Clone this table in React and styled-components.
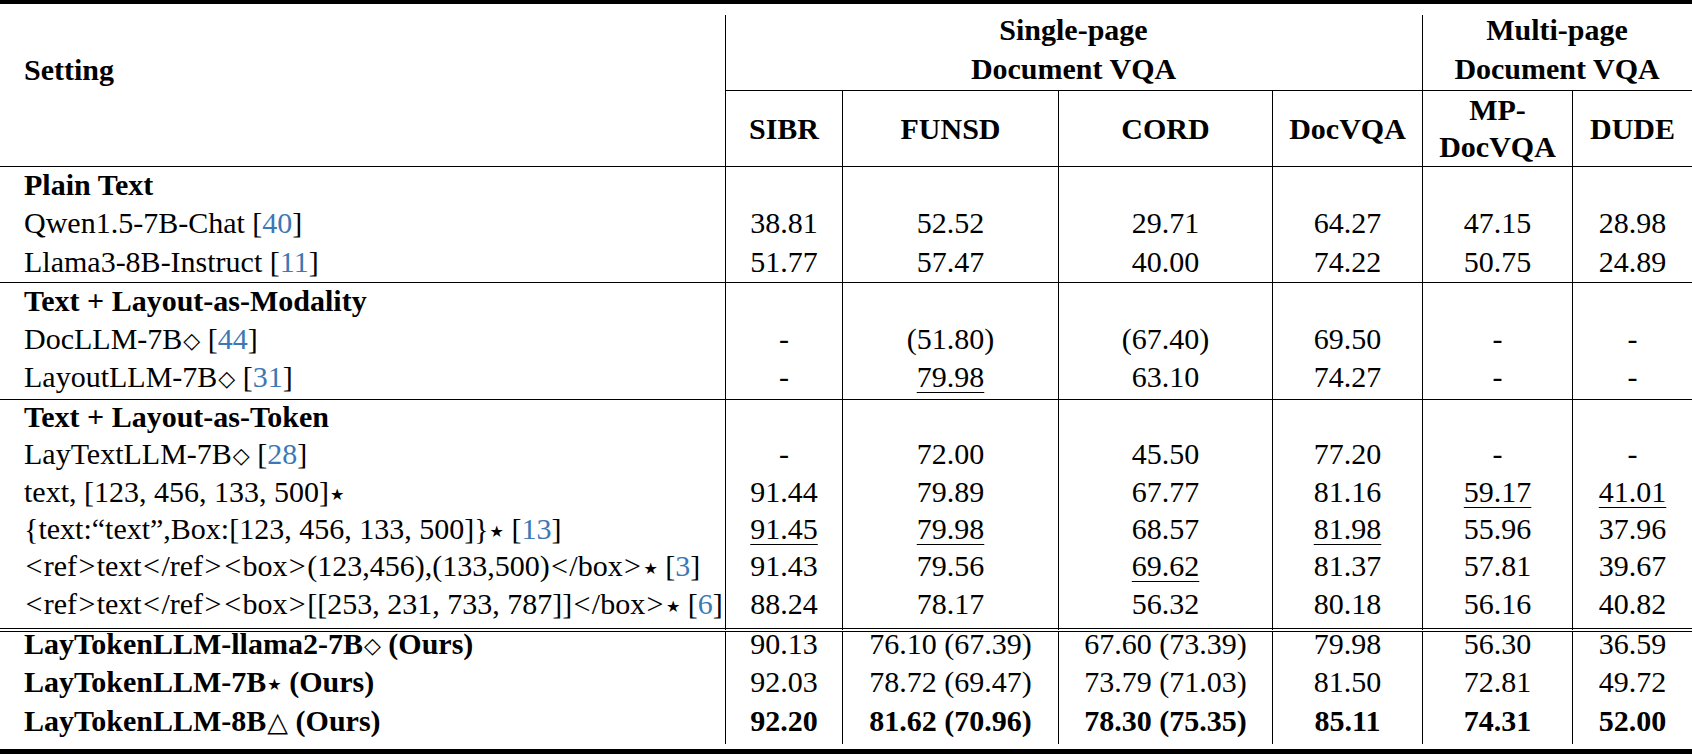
import React from "react";
import styled, { createGlobalStyle } from "styled-components";

const GlobalStyle = createGlobalStyle`
  html, body {
    margin: 0;
    padding: 0;
    background: #fff;
  }
  body {
    font-family: "Liberation Serif", "Times New Roman", serif;
    color: #000;
  }
`;

const Table = styled.table`
  width: 1692px;
  border-collapse: separate;
  border-spacing: 0;
  table-layout: fixed;
  font-size: 30px;
  border-top: 4px solid #000;
  border-bottom: 5px solid #000;
`;

const SettingHead = styled.th`
  padding: 46.75px 0 0 24px;
  line-height: 38.3px;
  text-align: left;
  vertical-align: top;
  font-weight: 700;
  border-bottom: 1px solid #000;
`;

const GroupHead = styled.th`
  padding: 7.4px 0 2px;
  line-height: 38.3px;
  text-align: center;
  vertical-align: top;
  font-weight: 700;
  border-bottom: 1px solid #000;
  background: linear-gradient(#000, #000) no-repeat 0 11px / 1px 100%;
`;

const ColHead = styled.th`
  padding: 0;
  line-height: 37.5px;
  text-align: center;
  vertical-align: middle;
  font-weight: 700;
  border-left: 1px solid #000;
  border-bottom: 1px solid #000;
`;

const Cell = styled.td`
  padding: ${(p) => p.$top}px 0 ${(p) => p.$bottom}px ${(p) => (p.$num ? 0 : 24)}px;
  line-height: 24px;
  text-align: ${(p) => (p.$num ? "center" : "left")};
  vertical-align: top;
  font-weight: ${(p) => (p.$bold ? 700 : 400)};
  white-space: nowrap;
  border-left: ${(p) => (p.$num ? "1px solid #000" : "none")};
  border-bottom: ${(p) => p.$rule || "none"};
`;

const Spacer = styled.tr`
  td {
    height: 5px;
    padding: 0;
  }
`;

const Ref = styled.span`
  color: #3b78b5;
`;

const Under = styled.span`
  text-decoration: underline;
  text-decoration-thickness: 1px;
  text-underline-offset: 5px;
`;

const Symbol = styled.span`
  font-family: "DejaVu Sans", sans-serif;
  font-weight: 400;
  line-height: 0;
  font-size: ${(p) => p.$size}px;
  vertical-align: ${(p) => p.$raise || 0}px;
  margin-left: 1px;
`;

const Rel = styled.span`
  margin: 0 1.4px;
`;

const Cite = ({ n }) => (
  <>
    {" "}[<Ref>{n}</Ref>]
  </>
);

const D = () => <Symbol $size={22} $raise={1}>◇</Symbol>;
const S = () => <Symbol $size={16} $raise={2}>★</Symbol>;
const T = () => <Symbol $size={27}>△</Symbol>;
const L = () => <Rel>&lt;</Rel>;
const G = () => <Rel>&gt;</Rel>;

const sections = [
  {
    title: "Plain Text",
    top: 6,
    pitch: 38.3,
    tail: 0,
    rule: "1px solid #000",
    rows: [
      {
        label: <>Qwen1.5-7B-Chat<Cite n="40" /></>,
        vals: ["38.81", "52.52", "29.71", "64.27", "47.15", "28.98"],
      },
      {
        label: <>Llama3-8B-Instruct<Cite n="11" /></>,
        vals: ["51.77", "57.47", "40.00", "74.22", "50.75", "24.89"],
      },
    ],
  },
  {
    title: "Text + Layout-as-Modality",
    top: 6,
    pitch: 38.3,
    tail: 1,
    rule: "1px solid #000",
    rows: [
      {
        label: <>DocLLM-7B<D /><Cite n="44" /></>,
        vals: ["-", "(51.80)", "(67.40)", "69.50", "-", "-"],
      },
      {
        label: <>LayoutLLM-7B<D /><Cite n="31" /></>,
        vals: ["-", "_79.98", "63.10", "74.27", "-", "-"],
      },
    ],
  },
  {
    title: "Text + Layout-as-Token",
    top: 5,
    pitch: 37.4,
    tail: 3.8,
    rule: "4px double #000",
    rows: [
      {
        label: <>LayTextLLM-7B<D /><Cite n="28" /></>,
        vals: ["-", "72.00", "45.50", "77.20", "-", "-"],
      },
      {
        label: <>text, [123, 456, 133, 500]<S /></>,
        vals: ["91.44", "79.89", "67.77", "81.16", "_59.17", "_41.01"],
      },
      {
        label: <>{"{"}text:“text”,Box:[123, 456, 133, 500]{"}"}<S /><Cite n="13" /></>,
        vals: ["_91.45", "_79.98", "68.57", "_81.98", "55.96", "37.96"],
      },
      {
        label: (
          <>
            <L />ref<G />text<L />/ref<G /><L />box<G />(123,456),(133,500)<L />/box<G />
            <S /><Cite n="3" />
          </>
        ),
        vals: ["91.43", "79.56", "_69.62", "81.37", "57.81", "39.67"],
      },
      {
        label: (
          <>
            <L />ref<G />text<L />/ref<G /><L />box<G />[[253, 231, 733, 787]]<L />/box<G />
            <S /><Cite n="6" />
          </>
        ),
        vals: ["88.24", "78.17", "56.32", "80.18", "56.16", "40.82"],
      },
    ],
  },
  {
    title: null,
    top: 0,
    pitch: 38.5,
    tail: -3.5,
    rule: null,
    rows: [
      {
        label: <>LayTokenLLM-llama2-7B<D /> (Ours)</>,
        labelBold: true,
        vals: ["90.13", "76.10 (67.39)", "67.60 (73.39)", "79.98", "56.30", "36.59"],
      },
      {
        label: <>LayTokenLLM-7B<S /> (Ours)</>,
        labelBold: true,
        vals: ["92.03", "78.72 (69.47)", "73.79 (71.03)", "81.50", "72.81", "49.72"],
      },
      {
        label: <>LayTokenLLM-8B<T /> (Ours)</>,
        labelBold: true,
        bold: true,
        vals: ["92.20", "81.62 (70.96)", "78.30 (75.35)", "85.11", "74.31", "52.00"],
      },
    ],
  },
];

const Value = ({ v }) => (v.startsWith("_") ? <Under>{v.slice(1)}</Under> : v);

const widths = [725, 117, 216, 214, 150, 150, 120];
const columns = ["SIBR", "FUNSD", "CORD", "DocVQA", <>MP-<br />DocVQA</>, "DUDE"];

const SectionBody = ({ section }) => {
  const rows = section.title
    ? [{ label: section.title, labelBold: true, vals: null }, ...section.rows]
    : section.rows;
  return (
    <tbody>
      {rows.map((row, idx) => {
        const last = idx === rows.length - 1;
        const top = section.top;
        const bottom = section.pitch - 24 - top + (last ? section.tail : 0);
        const rule = last ? section.rule : null;
        return (
          <tr key={idx}>
            <Cell $top={top} $bottom={bottom} $rule={rule} $bold={row.labelBold}>
              {row.label}
            </Cell>
            {widths.slice(1).map((_, c) => (
              <Cell key={c} $num $top={top} $bottom={bottom} $rule={rule} $bold={row.bold}>
                {row.vals ? <Value v={row.vals[c]} /> : null}
              </Cell>
            ))}
          </tr>
        );
      })}
    </tbody>
  );
};

export default function App() {
  return (
    <>
      <GlobalStyle />
      <Table>
        <colgroup>
          {widths.map((w, i) => (
            <col key={i} style={{ width: w }} />
          ))}
        </colgroup>
        <thead>
          <tr>
            <SettingHead rowSpan={2}>Setting</SettingHead>
            <GroupHead colSpan={4}>
              Single-page
              <br />
              Document VQA
            </GroupHead>
            <GroupHead colSpan={2}>
              Multi-page
              <br />
              Document VQA
            </GroupHead>
          </tr>
          <tr>
            {columns.map((c, i) => (
              <ColHead key={i}>{c}</ColHead>
            ))}
          </tr>
        </thead>
        {sections.map((s, i) => (
          <SectionBody key={i} section={s} />
        ))}
        <tbody>
          <Spacer>
            <td colSpan={7} />
          </Spacer>
        </tbody>
      </Table>
    </>
  );
}
